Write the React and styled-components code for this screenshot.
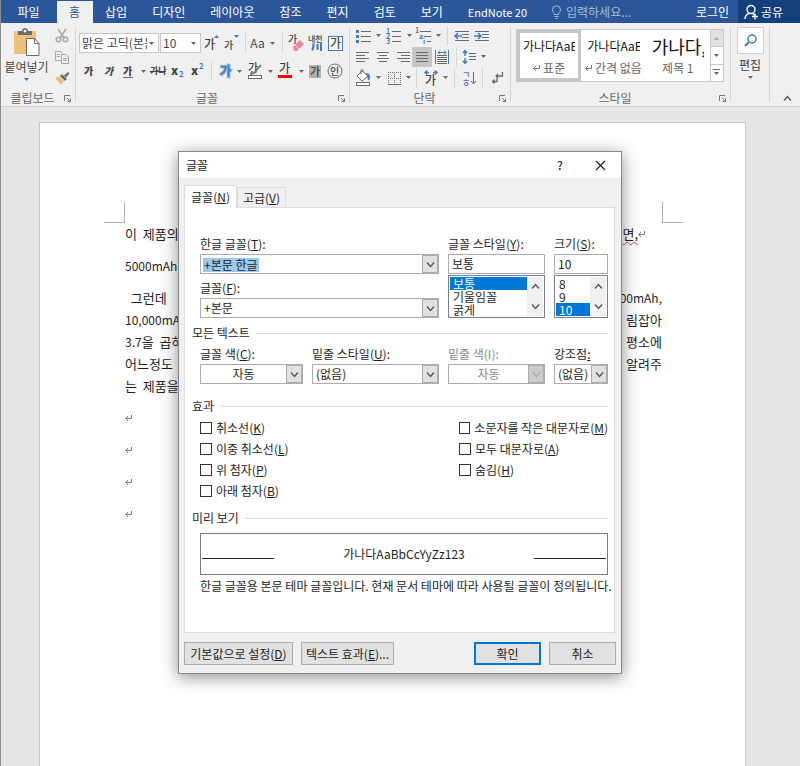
import styled, { createGlobalStyle, css } from "styled-components";

const GlobalStyle = createGlobalStyle`
  * { box-sizing: border-box; }
  body {
    margin: 0;
    color: #1e1e1e;
    font: 12px/16px "Noto Sans CJK KR", sans-serif;
  }
  button, input, select {
    margin: 0;
    padding: 0;
    border: 0;
    background: none;
    border-radius: 0;
    color: inherit;
    font: inherit;
    outline: none;
  }
  svg { display: block; flex: none; overflow: visible; }
`;

const Window = styled.div`
  display: flex;
  flex-direction: column;
  min-height: 100vh;
  border-left: 1px solid #8c8c8c;
  background: #e6e6e6;
`;

/* ---------- tab bar ---------- */

const TabBar = styled.nav`
  display: flex;
  height: 23px;
  background: #2b579a;
  color: #fff;
`;

const Tab = styled.button`
  height: 23px;
  padding: 0 13px 0 12px;
  white-space: nowrap;
  ${(p) => p.$file && css`width: 56px;`}
  ${(p) => p.$latin && css`font-size: 11px;`}
  ${(p) =>
    p.$active &&
    css`
      height: 22px;
      margin-top: 1px;
      background: #f0f0f0;
      color: #2b579a;
    `}
`;

const TellMe = styled.label`
  display: flex;
  flex: 1;
  align-items: center;
  gap: 4px;
  padding-left: 11px;
  color: #a9bddc;
  input { width: 100%; }
  input::placeholder { color: #a9bddc; opacity: 1; }
`;

const Login = styled.button`
  padding: 0 9px;
  white-space: nowrap;
`;

const Share = styled.button`
  display: flex;
  align-items: center;
  gap: 2px;
  width: 62px;
  padding-left: 6px;
  background: #133f7b;
`;

/* ---------- ribbon ---------- */

const Ribbon = styled.header`
  display: flex;
  height: 84px;
  background: #f0f0f0;
  border-bottom: 1px solid #cfcfcf;
  color: #444;
`;

const Group = styled.section`
  display: flex;
  flex-direction: column;
  width: ${(p) => p.$w || "auto"};
  flex: ${(p) => (p.$w ? "none" : "1")};
  min-width: 0;
`;

const GroupBody = styled.div`
  flex: 1;
  display: flex;
  flex-direction: ${(p) => (p.$row ? "row" : "column")};
  padding: ${(p) => p.$pad || "0 3px"};
`;

const GroupFooter = styled.div`
  display: flex;
  align-items: center;
  height: 16px;
  padding-right: 4px;
  color: #666;
  span { flex: 1; text-align: center; }
`;

const Divider = styled.div`
  width: 1px;
  margin: 4px 0;
  background: #d4d4d4;
`;

const ToolRow = styled.div`
  display: flex;
  align-items: center;
  height: ${(p) => p.$h}px;
`;

const Tool = styled.button`
  display: flex;
  align-items: center;
  justify-content: center;
  width: ${(p) => p.$w || 20}px;
  height: 20px;
  background: ${(p) => (p.$on ? "#c5c5c5" : "none")};
`;

const ToolSep = styled.span`
  width: ${(p) => p.$w}px;
  height: 20px;
  background: linear-gradient(#d4d4d4, #d4d4d4) center / 1px 100% no-repeat;
`;

const RibbonCombo = styled.div`
  display: flex;
  align-items: center;
  width: ${(p) => p.$w}px;
  height: 20px;
  margin-right: 1px;
  padding: 0 3px 0 2px;
  background: #fff;
  border: 1px solid #c6c6c6;
  select {
    flex: 1;
    min-width: 0;
    height: 18px;
    appearance: none;
    overflow: hidden;
    text-overflow: clip;
  }
`;

const PasteButton = styled.button`
  display: flex;
  flex-direction: column;
  align-items: center;
  width: 48px;
  padding-top: 5px;
  white-space: nowrap;
  gap: 3px;
`;

const ClipTools = styled.div`
  display: flex;
  flex-direction: column;
  padding-top: 3px;
  gap: 1px;
  margin-left: 2px;
`;

const Gallery = styled.div`
  display: flex;
  height: 53px;
  max-width: 208px;
  background: #fff;
  border: 1px solid #c6c6c6;
`;

const StyleCell = styled.button`
  flex: 1;
  min-width: 0;
  padding: 0 3px;
  border: 3px solid ${(p) => (p.$on ? "#c5c5c5" : "#fff")};
  text-align: center;
  overflow: hidden;
  white-space: nowrap;
`;

const StyleSample = styled.span`
  display: block;
  height: 24px;
  overflow: hidden;
  color: #111;
  font-size: ${(p) => (p.$big ? 18 : 12)}px;
  line-height: 24px;
  text-align: left;
`;

const StyleName = styled.span`
  display: flex;
  align-items: center;
  justify-content: center;
  gap: 3px;
  height: 20px;
  color: #666;
`;

const GalleryScroll = styled.div`
  display: flex;
  flex-direction: column;
  width: 13px;
  border-left: 1px solid #c6c6c6;
  button {
    flex: 1;
    display: flex;
    align-items: center;
    justify-content: center;
  }
  button:first-child { background: #e1e1e1; }
  button + button { border-top: 1px solid #c6c6c6; }
`;

const EditButton = styled.button`
  display: flex;
  flex-direction: column;
  align-items: center;
  gap: 3px;
`;

const EditIcon = styled.span`
  display: flex;
  align-items: center;
  justify-content: center;
  width: 27px;
  height: 27px;
  background: #fcfcfc;
  border: 1px solid #d0d0d0;
`;

const Collapse = styled.button`
  align-self: flex-end;
  display: flex;
  justify-content: center;
  width: 30px;
  padding: 0 0 3px 4px;
`;

/* ---------- document ---------- */

const Desk = styled.main`
  flex: 1;
  display: flex;
  padding: 15px 54px 0 38px;
`;

const Page = styled.article`
  flex: 1;
  padding: 79px 62px 0 64px;
  background: #fff;
  border: 1px solid #c8c8c8;
  border-bottom: 0;
`;

const CropMarks = styled.div`
  display: flex;
  justify-content: space-between;
`;

const Crop = styled.i`
  width: 21px;
  height: 21px;
  border-bottom: 1px solid #b0b0b0;
  border-${(p) => p.$side}: 1px solid #b0b0b0;
`;

const Copy = styled.div`
  padding: 0 21px;
  font-size: 13px;
  line-height: 22px;
`;

const Para = styled.div`
  margin-bottom: 10px;
`;

const Line = styled.div`
  display: flex;
  align-items: center;
  justify-content: space-between;
  height: 22px;
  white-space: pre;
`;

const Latin = styled.span`
  font-size: 12px;
`;

const LineEnd = styled.span`
  display: flex;
  align-items: center;
  padding-right: ${(p) => p.$inset || 0}px;
`;

const Misspelled = styled.span`
  text-decoration: underline wavy #e33 1px;
  text-underline-offset: 2px;
`;

/* ---------- dialog ---------- */

const Overlay = styled.div`
  position: absolute;
  top: 151px;
  left: 0;
  right: 0;
  display: flex;
  justify-content: center;
`;

const Dialog = styled.form`
  width: 444px;
  background: #f0f0f0;
  border: 1px solid #8a8a8a;
  box-shadow: 0 3px 16px rgba(0, 0, 0, 0.45);
`;

const TitleBar = styled.div`
  display: flex;
  align-items: center;
  height: 26px;
  padding: 0 15px 0 7px;
  background: #fff;
  h1 { flex: 1; margin: 0; font-size: 12px; font-weight: 400; }
`;

const TitleButton = styled.button`
  display: flex;
  justify-content: center;
  width: 12px;
  margin-left: 28px;
  font-weight: 500;
`;

const DialogBody = styled.div`
  padding: 7px 5px 8px;
`;

const DialogTabs = styled.div`
  display: flex;
  align-items: flex-end;
`;

const DialogTab = styled.button`
  height: ${(p) => (p.$active ? 23 : 20)}px;
  width: ${(p) => (p.$active ? 53 : 49)}px;
  margin-bottom: ${(p) => (p.$active ? -1 : 0)}px;
  background: ${(p) => (p.$active ? "#fff" : "#f0f0f0")};
  border: 1px solid #dcdcdc;
  border-bottom: 0;
  white-space: nowrap;
  z-index: 1;
`;

const Panel = styled.div`
  height: 426px;
  margin-right: 1px;
  padding: 28px 6px 0 7px;
  background: #fff;
  border: 1px solid #dcdcdc;
`;

const Fields = styled.div`
  display: grid;
  grid-template-columns: ${(p) => p.$cols};
  column-gap: 9px;
  margin-left: 8px;
`;

const FieldStack = styled.div`
  display: flex;
  flex-direction: column;
  gap: 6px;
`;

const Field = styled.div`
  min-width: 0;
  color: ${(p) => (p.$off ? "#8a8a8a" : "inherit")};
`;

const Label = styled.label`
  display: block;
  margin-bottom: 2px;
  white-space: nowrap;
`;

const Box = styled.div`
  display: flex;
  height: 20px;
  background: #fff;
  border: 1px solid #a9abb5;
  select, > input {
    flex: 1;
    min-width: 0;
    height: 18px;
    padding: 0 3px;
    line-height: 18px;
    appearance: none;
    opacity: 1;
    color: inherit;
    text-align: ${(p) => (p.$center ? "center" : "left")};
  }
`;

const Picked = styled.div`
  flex: 1;
  padding: 2px;
  input {
    field-sizing: content;
    height: 14px;
    padding: 0 1px;
    line-height: 14px;
    background: #99c9ef;
  }
`;

const Drop = styled.span`
  display: flex;
  align-items: center;
  justify-content: center;
  width: 16px;
  background: ${(p) => (p.$off ? "#ccc" : "#e1e1e1")};
  border: 1px solid #adadad;
`;

const ListBox = styled.div`
  display: flex;
  height: 43px;
  margin-top: 1px;
  padding: 1px;
  border: 1px solid #7a7f8c;
  select {
    flex: 1;
    min-width: 0;
    height: 39px;
    overflow: hidden;
    scrollbar-width: none;
  }
  option {
    display: flex;
    align-items: center;
    height: 13px;
    min-height: 0;
    padding: 0 3px;
    line-height: 13px;
  }
  option:checked {
    background: linear-gradient(#0078d7, #0078d7);
    -webkit-text-fill-color: #fff;
  }
`;

const ListScroll = styled.div`
  display: flex;
  flex-direction: column;
  justify-content: space-between;
  align-items: center;
  width: 16px;
  padding: 5px 0;
  background: #f0f0f0;
`;

const Heading = styled.h2`
  display: flex;
  align-items: center;
  gap: 6px;
  margin: ${(p) => p.$top}px 0 ${(p) => p.$bottom}px;
  font-size: 12px;
  font-weight: 400;
  &::after {
    content: "";
    flex: 1;
    height: 1px;
    background: #dcdcdc;
  }
`;

const Checks = styled.div`
  display: grid;
  grid-template-columns: 1fr 149px;
  grid-auto-rows: 21px;
  margin-left: 8px;
`;

const Check = styled.label`
  grid-column: ${(p) => p.$col};
  display: flex;
  align-items: center;
  gap: 4px;
  white-space: nowrap;
  input {
    width: 12px;
    height: 12px;
    appearance: none;
    background: #fff;
    border: 1px solid #333;
  }
`;

const Preview = styled.div`
  display: flex;
  align-items: center;
  justify-content: space-between;
  height: 42px;
  margin-left: 8px;
  padding: 0 1px;
  border: 1px solid #7a7a7a;
`;

const Rule = styled.i`
  width: 72px;
  height: 10px;
  border-bottom: 1px solid #222;
`;

const Note = styled.p`
  margin: 3px 0 0 8px;
  white-space: nowrap;
`;

const Actions = styled.div`
  display: flex;
  gap: 8px;
  margin-top: 9px;
`;

const ActionButton = styled.button`
  width: ${(p) => p.$w}px;
  height: 23px;
  margin-left: ${(p) => (p.$push ? "auto" : 0)};
  background: #e1e1e1;
  border: ${(p) => (p.$primary ? "2px solid #0078d7" : "1px solid #adadad")};
  white-space: nowrap;
`;

/* ---------- icons ---------- */

const BLUE = "#3f7cb8";
const GREY = "#6a6a6a";

const Caret = ({ w = 8, color = "#666" }) => (
  <Tool as="span" $w={w}>
    <svg width="5" height="3"><path d="M0 0h5L2.5 3z" fill={color} /></svg>
  </Tool>
);

const Chevron = ({ up, color = "#555", size = 9 }) => (
  <svg width={size} height={size} viewBox="0 0 9 9" fill="none" stroke={color} strokeWidth="1.3">
    <path d={up ? "M1 6.5l3.5-4 3.5 4" : "M1 2.5l3.5 4 3.5-4"} />
  </svg>
);

const Launcher = () => (
  <svg width="7" height="7" fill="none" stroke="#777">
    <path d="M.5 6V.5H6M3 3l3.5 3.5M6.500 3.500v3H3.500" />
  </svg>
);

const ReturnMark = ({ color = "#777" }) => (
  <svg width="7" height="8" fill="none" stroke={color}>
    <path d="M6.500 1v3.500H1M3 2L.8 4.500 3 7" />
  </svg>
);

const Svg = ({ w = 18, h = 18, children, ...rest }) => (
  <svg width={w} height={h} viewBox={`0 0 ${w} ${h}`} fill="none" stroke={GREY} {...rest}>
    {children}
  </svg>
);

const T = ({ fill = "#444", size = 12, weight = 500, ...rest }) => (
  <text stroke="none" fill={fill} fontSize={size} fontWeight={weight} {...rest} />
);

const Bulb = () => (
  <Svg w={11} h={14} stroke="#a9bddc">
    <path d="M3.500 9.500C3.500 8 1.500 7 1.500 4.800a4 4 0 0 1 8 0C9.500 7 7.500 8 7.500 9.500zM3.500 11.500h4M4.500 13.500h2" />
  </Svg>
);

const Person = () => (
  <Svg w={15} h={16} stroke="#fff" strokeWidth="1.4">
    <circle cx="7" cy="5.500" r="4" />
    <path d="M1 15c0-3 2-5 4.500-5.600M8.500 9.500l2 1.500M8 12.500h6M11 9.500v6" />
  </Svg>
);

const Paste = () => (
  <Svg w={26} h={28} stroke="none">
    <path d="M0 3h22v23H0z" fill="#ecc27b" />
    <path d="M4 3h4c0-4 6-4 6 0h4v4H4z" fill={GREY} />
    <circle cx="11" cy="3" r="1.500" fill="#f0f0f0" />
    <path d="M12.500 10.500h8l4.500 5v12H12.500z" fill="#fff" stroke={GREY} />
    <path d="M20.500 10.500v5H25" stroke={GREY} />
  </Svg>
);

const Scissors = () => (
  <Svg w={14} h={14} stroke="#a8a8a8" strokeWidth="1.500">
    <path d="M3 0l6 9M11 0L5 9" />
    <circle cx="3.500" cy="10.500" r="2.300" />
    <circle cx="10.500" cy="10.500" r="2.300" />
  </Svg>
);

const CopyIcon = () => (
  <Svg w={14} h={13} stroke="#a9a2ac">
    <path d="M.5.500h5l2 2v7h-7zM2 3.500h3M2 5.500h3" />
    <path d="M6.500 3.500h4.500l2.500 2.500v6.500h-7z" fill="#f4f2f4" />
    <path d="M8 7.500h4M8 9.500h4" />
  </Svg>
);

const Brush = () => (
  <Svg w={15} h={13} stroke="none">
    <path d="M0 6l4-2 5 5-3 4z" fill="#ecc27b" />
    <path d="M5 4l2-2 5 5-2 2zM9 3.500L13 0l1.500 1.500L11 5.500z" fill={GREY} />
  </Svg>
);

const Grow = ({ down }) => (
  <Svg>
    <T x="1" y="15" size={down ? 10 : 12}>가</T>
    <path d={down ? "M11 1h5l-2.500 3z" : "M11 4h5L13.500 1z"} fill={BLUE} stroke="none" />
  </Svg>
);

const Eraser = () => (
  <Svg>
    <T x="1" y="9" size={10}>가</T>
    <path d="M6 13l7-7 4 4-7 7H7z" fill="#e9849a" stroke="none" />
    <path d="M8 11l4 4" stroke="#f7d5dc" />
  </Svg>
);

const Ruby = () => (
  <Svg>
    <T x="2" y="8" size={8}>내천</T>
    <path d="M7.500 9.500c0 4 0 5-1.500 7M11.500 10v6M15 9v8" stroke={BLUE} strokeWidth="2" />
  </Svg>
);

const BoxedGa = () => (
  <Svg>
    <rect x="2.500" y="2.500" width="14" height="14" fill="#fff" stroke={BLUE} />
    <T x="4" y="14">가</T>
  </Svg>
);

const Ga = ({ italic, underline }) => (
  <Svg>
    <T x="4" y="13" size={10} weight={900} fontStyle={italic ? "italic" : "normal"}>가</T>
    {underline && <path d="M4 15.500h10" />}
  </Svg>
);

const Strike = () => (
  <Svg>
    <T x="1" y="12" size={9} weight={700}>가나</T>
    <path d="M1 9.500h16" stroke="#444" />
  </Svg>
);

const Script = ({ sup }) => (
  <Svg>
    <T x="3" y="13" size={12} weight={900}>x</T>
    <T x="11" y={sup ? 7 : 15} size={8} fill={BLUE} weight={700}>2</T>
  </Svg>
);

const Glow = () => (
  <Svg>
    <text x="4" y="14" fontSize="12" fill="#fff" stroke="#a8cbea" strokeWidth="3">가</text>
    <text x="4" y="14" fontSize="12" fill="#fff" stroke={BLUE} strokeWidth="1">가</text>
  </Svg>
);

const Highlight = () => (
  <Svg>
    <T x="2" y="10" size={11}>가</T>
    <path d="M15 3l-7 8-3 1 1-3" strokeWidth="1.500" />
    <rect x="2.500" y="13.500" width="13" height="3" fill="#fff" />
  </Svg>
);

const FontColor = () => (
  <Svg>
    <T x="3" y="11">가</T>
    <path d="M2 13h14v3H2z" fill="#f00" stroke="none" />
  </Svg>
);

const ShadedGa = () => (
  <Svg>
    <path d="M3 3h12v13H3z" fill="#b0b0b0" stroke="none" />
    <T x="4" y="14" size={11}>가</T>
  </Svg>
);

const CircledIn = () => (
  <Svg>
    <circle cx="9" cy="9" r="7" />
    <T x="4" y="13" size={10}>인</T>
  </Svg>
);

const Bullets = () => (
  <Svg>
    <path d="M7 4.500h10M7 9.500h10M7 14.500h10" />
    <path d="M2 3h3v3H2zM2 8h3v3H2zM2 13h3v3H2z" fill={BLUE} stroke="none" />
  </Svg>
);

const Numbers = () => (
  <Svg>
    <path d="M7 4.500h9M7 9.500h9M7 14.500h9" />
    {[1, 2, 3].map((n) => (
      <T key={n} x="1" y={2 + n * 5} size={7} fill={BLUE} weight={700}>{n}</T>
    ))}
  </Svg>
);

const Multilevel = () => (
  <Svg>
    <path d="M5 4.500h11M9 9.500h7M12 14.500h4" />
    <T x="0" y="6" size={7} fill={BLUE} weight={700}>1</T>
    <T x="4" y="12" size={7} fill={BLUE} weight={700}>a</T>
    <T x="8" y="17" size={7} fill={BLUE} weight={700}>i</T>
  </Svg>
);

const Indent = ({ out }) => (
  <Svg>
    <path d="M2 4.500h14M9 7.500h7M9 10.500h7M2 13.500h14" />
    <path d={out ? "M9 9H2M5 6L2 9l3 3" : "M1 9h7M5 6l3 3-3 3"} stroke={BLUE} strokeWidth="1.600" />
  </Svg>
);

const alignPaths = {
  left: "M2 4.500h13M2 7.500h9M2 10.500h13M2 13.500h9",
  center: "M3 4.500h12M5 7.500h8M3 10.500h12M5 13.500h8",
  right: "M3 4.500h13M7 7.500h9M3 10.500h13M7 13.500h9",
  justify: "M3 4.500h12M3 7.500h12M3 10.500h12M3 13.500h12",
};

const Align = ({ kind }) => <Svg><path d={alignPaths[kind]} /></Svg>;

const Distribute = () => (
  <Svg>
    <path d="M4 7.500h10M4 9.500h10M4 11.500h10M4 13.500h10M4 15.500h10" />
    <path d="M2.500 2v14M15.500 2v14M5 4.500h8M7 2.500L5 4.500l2 2M11 2.500l2 2-2 2" stroke={BLUE} />
  </Svg>
);

const Spacing = () => (
  <Svg>
    <path d="M8 5.500h7M8 8.500h7M8 11.500h7" />
    <path d="M4 3v5M2 5l2-2.500L6 5M4 10v5M2 13l2 2.500L6 13" stroke={BLUE} strokeWidth="1.400" />
  </Svg>
);

const Bucket = () => (
  <Svg>
    <path d="M3 7l5-5 6 5-6 5zM7 5V1.500C7 0 9 0 9 1.500V3" fill="#fff" />
    <path d="M12 4c4 0 5 3 3 8-1-2-2-3-2-5z" fill={BLUE} stroke="none" />
    <rect x="2.500" y="13.500" width="13" height="3" fill="#fff" />
  </Svg>
);

const Borders = () => (
  <Svg>
    <path d="M3.500 3v12M9.500 3v12M15.500 3v12M3 3.500h12M3 9.500h12" strokeDasharray="1 1" />
    <path d="M3 15.500h13" />
  </Svg>
);

const Stretch = () => (
  <Svg>
    <T x="3" y="16">가</T>
    <path d="M7 3.500H3M5 1.500l-2 2 2 2M11 3.500h4M13 1.500l2 2-2 2" stroke={BLUE} strokeWidth="1.400" />
  </Svg>
);

const Sort = () => (
  <Svg>
    <T x="2" y="9" size={9} fill={BLUE}>ㄱ</T>
    <T x="2" y="17" size={9} fill="#8a4fb0">ㅎ</T>
    <path d="M13.500 3v11M11 12l2.500 3 2.500-3" />
  </Svg>
);

const Marks = () => (
  <Svg>
    <path d="M14.500 3v4H8M10 5L8 7l2 2M9 9v3.500H4M6.500 10.500l-2 2 2 2" strokeWidth="1.300" />
  </Svg>
);

const Lens = () => (
  <Svg w={13} h={13} stroke={BLUE} strokeWidth="1.500">
    <circle cx="8" cy="5" r="4" />
    <path d="M5 8l-4 4" strokeWidth="2" />
  </Svg>
);

const tabs = ["삽입", "디자인", "레이아웃", "참조", "편지", "검토", "보기"];

const leftChecks = [["취소선", "K"], ["이중 취소선", "L"], ["위 첨자", "P"], ["아래 첨자", "B"]];
const rightChecks = [["소문자를 작은 대문자로", "M"], ["모두 대문자로", "A"], ["숨김", "H"]];

/* caption with its underlined access key */
const Key = ({ text, k, end = "" }) => <>{text}(<u>{k}</u>){end}</>;

const SelectField = ({ id, label, value, off, center }) => (
  <Field $off={off}>
    <Label htmlFor={id}>{label}</Label>
    <Box $center={center}>
      <select id={id} disabled={off}><option>{value}</option></select>
      <Drop $off={off}><Chevron color={off ? "#aaa" : "#555"} /></Drop>
    </Box>
  </Field>
);

const ListField = ({ id, label, value, options }) => (
  <Field>
    <Label id={`${id}-label`} htmlFor={id}>{label}</Label>
    <Box><input id={id} defaultValue={value} /></Box>
    <ListBox>
      <select size="3" defaultValue={value} aria-labelledby={`${id}-label`}>
        {options.map((o) => <option key={o}>{o}</option>)}
      </select>
      <ListScroll><Chevron up /><Chevron /></ListScroll>
    </ListBox>
  </Field>
);

const Footer = ({ children }) => (
  <GroupFooter><span>{children}</span><Launcher /></GroupFooter>
);

const MainRibbon = () => (
  <Ribbon>
    <Group $w="74px">
      <GroupBody $row $pad="0 3px 0 2px">
        <PasteButton><Paste />붙여넣기<svg width="5" height="3"><path d="M0 0h5L2.500 3z" fill="#666" /></svg></PasteButton>
        <ClipTools>
          <Tool aria-label="잘라내기"><Scissors /></Tool>
          <Tool aria-label="복사"><CopyIcon /></Tool>
          <Tool aria-label="서식 복사"><Brush /></Tool>
        </ClipTools>
      </GroupBody>
      <Footer>클립보드</Footer>
    </Group>
    <Divider />
    <Group $w="273px">
      <GroupBody $pad="6px 3px 0">
        <ToolRow $h={28}>
          <RibbonCombo $w={80}>
            <select aria-label="글꼴"><option>맑은 고딕(본문 한글)</option></select><Caret />
          </RibbonCombo>
          <RibbonCombo $w={41}>
            <select aria-label="글꼴 크기"><option>10</option></select><Caret />
          </RibbonCombo>
          <Tool><Grow /></Tool>
          <Tool><Grow down /></Tool>
          <ToolSep $w={6} />
          <Tool $w={19}>Aa</Tool><Caret w={10} />
          <ToolSep $w={10} />
          <Tool $w={18}><Eraser /></Tool>
          <Tool><Ruby /></Tool>
          <Tool><BoxedGa /></Tool>
        </ToolRow>
        <ToolRow $h={28}>
          <Tool><Ga /></Tool>
          <Tool><Ga italic /></Tool>
          <Tool $w={18}><Ga underline /></Tool><Caret w={12} />
          <Tool $w={18}><Strike /></Tool>
          <Tool><Script /></Tool>
          <Tool><Script sup /></Tool>
          <ToolSep $w={8} />
          <Tool><Glow /></Tool><Caret />
          <Tool $w={24}><Highlight /></Tool><Caret w={6} />
          <Tool $w={24}><FontColor /></Tool><Caret />
          <Tool><ShadedGa /></Tool>
          <Tool><CircledIn /></Tool>
        </ToolRow>
      </GroupBody>
      <Footer>글꼴</Footer>
    </Group>
    <Divider />
    <Group $w="160px">
      <GroupBody $pad="2px 0 0 3px">
        <ToolRow $h={21}>
          <Tool><Bullets /></Tool><Caret w={11} />
          <Tool><Numbers /></Tool><Caret w={10} />
          <Tool><Multilevel /></Tool><Caret />
          <ToolSep $w={10} />
          <Tool><Indent out /></Tool>
          <Tool><Indent /></Tool>
        </ToolRow>
        <ToolRow $h={21}>
          <Tool><Align kind="left" /></Tool>
          <Tool><Align kind="center" /></Tool>
          <Tool $w={19}><Align kind="right" /></Tool>
          <Tool $on><Align kind="justify" /></Tool>
          <Tool><Distribute /></Tool>
          <ToolSep $w={8} />
          <Tool><Spacing /></Tool><Caret w={6} />
        </ToolRow>
        <ToolRow $h={21}>
          <Tool><Bucket /></Tool><Caret w={11} />
          <Tool><Borders /></Tool><Caret />
          <ToolSep $w={9} />
          <Tool><Stretch /></Tool><Caret />
          <ToolSep $w={10} />
          <Tool><Sort /></Tool>
          <ToolSep $w={6} />
          <Tool $w={24}><Marks /></Tool>
        </ToolRow>
      </GroupBody>
      <Footer>단락</Footer>
    </Group>
    <Divider />
    <Group>
      <GroupBody $pad="6px 6px 0 5px">
        <Gallery>
          <StyleCell $on><StyleSample>가나다AaBbCc</StyleSample><StyleName><ReturnMark />표준</StyleName></StyleCell>
          <StyleCell><StyleSample>가나다AaBbCc</StyleSample><StyleName><ReturnMark />간격 없음</StyleName></StyleCell>
          <StyleCell><StyleSample $big>가나다,</StyleSample><StyleName>제목 1</StyleName></StyleCell>
          <GalleryScroll>
            <button aria-label="위로"><svg width="5" height="3"><path d="M0 3h5L2.500 0z" fill="#aaa" /></svg></button>
            <button aria-label="아래로"><svg width="5" height="3"><path d="M0 0h5L2.500 3z" fill="#666" /></svg></button>
            <button aria-label="자세히"><svg width="7" height="7"><path d="M0 0h7v1H0zM1 3h5L3.500 6z" fill="#666" /></svg></button>
          </GalleryScroll>
        </Gallery>
      </GroupBody>
      <Footer>스타일</Footer>
    </Group>
    <Divider />
    <Group $w="38px">
      <GroupBody $pad="4px 0 0">
        <EditButton>
          <EditIcon><Lens /></EditIcon>
          편집
          <svg width="5" height="3"><path d="M0 0h5L2.500 3z" fill="#666" /></svg>
        </EditButton>
      </GroupBody>
    </Group>
    <Divider />
    <Collapse aria-label="리본 메뉴 축소"><Chevron up /></Collapse>
  </Ribbon>
);

const Document = () => (
  <Desk>
    <Page>
      <CropMarks><Crop $side="right" /><Crop $side="left" /></CropMarks>
      <Copy>
        <Para>
          <Line>
            <span>이  제품의</span>
            <LineEnd $inset={17}><Misspelled>면,</Misspelled><ReturnMark /></LineEnd>
          </Line>
        </Para>
        <Para><Line><Latin>5000mAh-</Latin></Line></Para>
        <Para>
          <Line><span>  그런데</span><Latin>00mAh,</Latin></Line>
          <Line><Latin>10,000mA</Latin><span>림잡아</span></Line>
          <Line><span><Latin>3.7</Latin>을  곱하</span><span>평소에</span></Line>
          <Line><span>어느정도</span><span>알려주</span></Line>
          <Line>는  제품을</Line>
        </Para>
        {[1, 2, 3, 4].map((n) => <Para key={n}><Line><ReturnMark /></Line></Para>)}
      </Copy>
    </Page>
  </Desk>
);

const FontDialog = () => (
  <Overlay>
    <Dialog role="dialog" aria-label="글꼴" onSubmit={(e) => e.preventDefault()}>
      <TitleBar>
        <h1>글꼴</h1>
        <TitleButton type="button">?</TitleButton>
        <TitleButton type="button" aria-label="닫기">
          <Svg w={11} h={11} stroke="#222" strokeWidth="1.200"><path d="M1 1l9 9M10 1l-9 9" /></Svg>
        </TitleButton>
      </TitleBar>
      <DialogBody>
        <DialogTabs>
          <DialogTab type="button" $active><Key text="글꼴" k="N" /></DialogTab>
          <DialogTab type="button"><Key text="고급" k="V" /></DialogTab>
        </DialogTabs>
        <Panel>
          <Fields $cols="1fr 97px 54px">
            <FieldStack>
              <Field>
                <Label htmlFor="hangul"><Key text="한글 글꼴" k="T" end=":" /></Label>
                <Box>
                  <Picked><input id="hangul" defaultValue="+본문 한글" /></Picked>
                  <Drop><Chevron /></Drop>
                </Box>
              </Field>
              <Field>
                <Label htmlFor="latin"><Key text="글꼴" k="F" end=":" /></Label>
                <Box>
                  <input id="latin" defaultValue="+본문" />
                  <Drop><Chevron /></Drop>
                </Box>
              </Field>
            </FieldStack>
            <ListField id="style" label={<Key text="글꼴 스타일" k="Y" end=":" />} value="보통" options={["보통", "기울임꼴", "굵게"]} />
            <ListField id="size" label={<Key text="크기" k="S" end=":" />} value="10" options={["8", "9", "10"]} />
          </Fields>
          <Heading $top={7} $bottom={5}>모든 텍스트</Heading>
          <Fields $cols="103px 1fr 97px 54px">
            <SelectField id="color" label={<Key text="글꼴 색" k="C" end=":" />} value="자동" center />
            <SelectField id="line" label={<Key text="밑줄 스타일" k="U" end=":" />} value="(없음)" />
            <SelectField id="lineColor" label="밑줄 색(I):" value="자동" off center />
            <SelectField id="dots" label={<>강조점<u>:</u></>} value="(없음)" />
          </Fields>
          <Heading $top={14} $bottom={3}>효과</Heading>
          <Checks>
            {leftChecks.map(([text, k], i) => (
              <Check key={k} $col={1} style={{ gridRow: i + 1 }}><input type="checkbox" /><span><Key text={text} k={k} /></span></Check>
            ))}
            {rightChecks.map(([text, k], i) => (
              <Check key={k} $col={2} style={{ gridRow: i + 1 }}><input type="checkbox" /><span><Key text={text} k={k} /></span></Check>
            ))}
          </Checks>
          <Heading $top={9} $bottom={7}>미리 보기</Heading>
          <Preview><Rule />가나다AaBbCcYyZz123<Rule /></Preview>
          <Note>한글 글꼴용 본문 테마 글꼴입니다. 현재 문서 테마에 따라 사용될 글꼴이 정의됩니다.</Note>
        </Panel>
        <Actions>
          <ActionButton type="button" $w={109}><Key text="기본값으로 설정" k="D" /></ActionButton>
          <ActionButton type="button" $w={93}><Key text="텍스트 효과" k="E" end="..." /></ActionButton>
          <ActionButton $w={67} $push $primary>확인</ActionButton>
          <ActionButton type="button" $w={67}>취소</ActionButton>
        </Actions>
      </DialogBody>
    </Dialog>
  </Overlay>
);

const App = () => {
  return (
    <>
      <GlobalStyle />
      <Window>
        <TabBar>
          <Tab $file>파일</Tab>
          <Tab $active>홈</Tab>
          {tabs.map((t) => <Tab key={t}>{t}</Tab>)}
          <Tab $latin>EndNote 20</Tab>
          <TellMe><Bulb /><input placeholder="입력하세요..." aria-label="입력하세요" /></TellMe>
          <Login>로그인</Login>
          <Share><Person />공유</Share>
        </TabBar>
        <MainRibbon />
        <Document />
      </Window>
      <FontDialog />
    </>
  );
};

export default App;
